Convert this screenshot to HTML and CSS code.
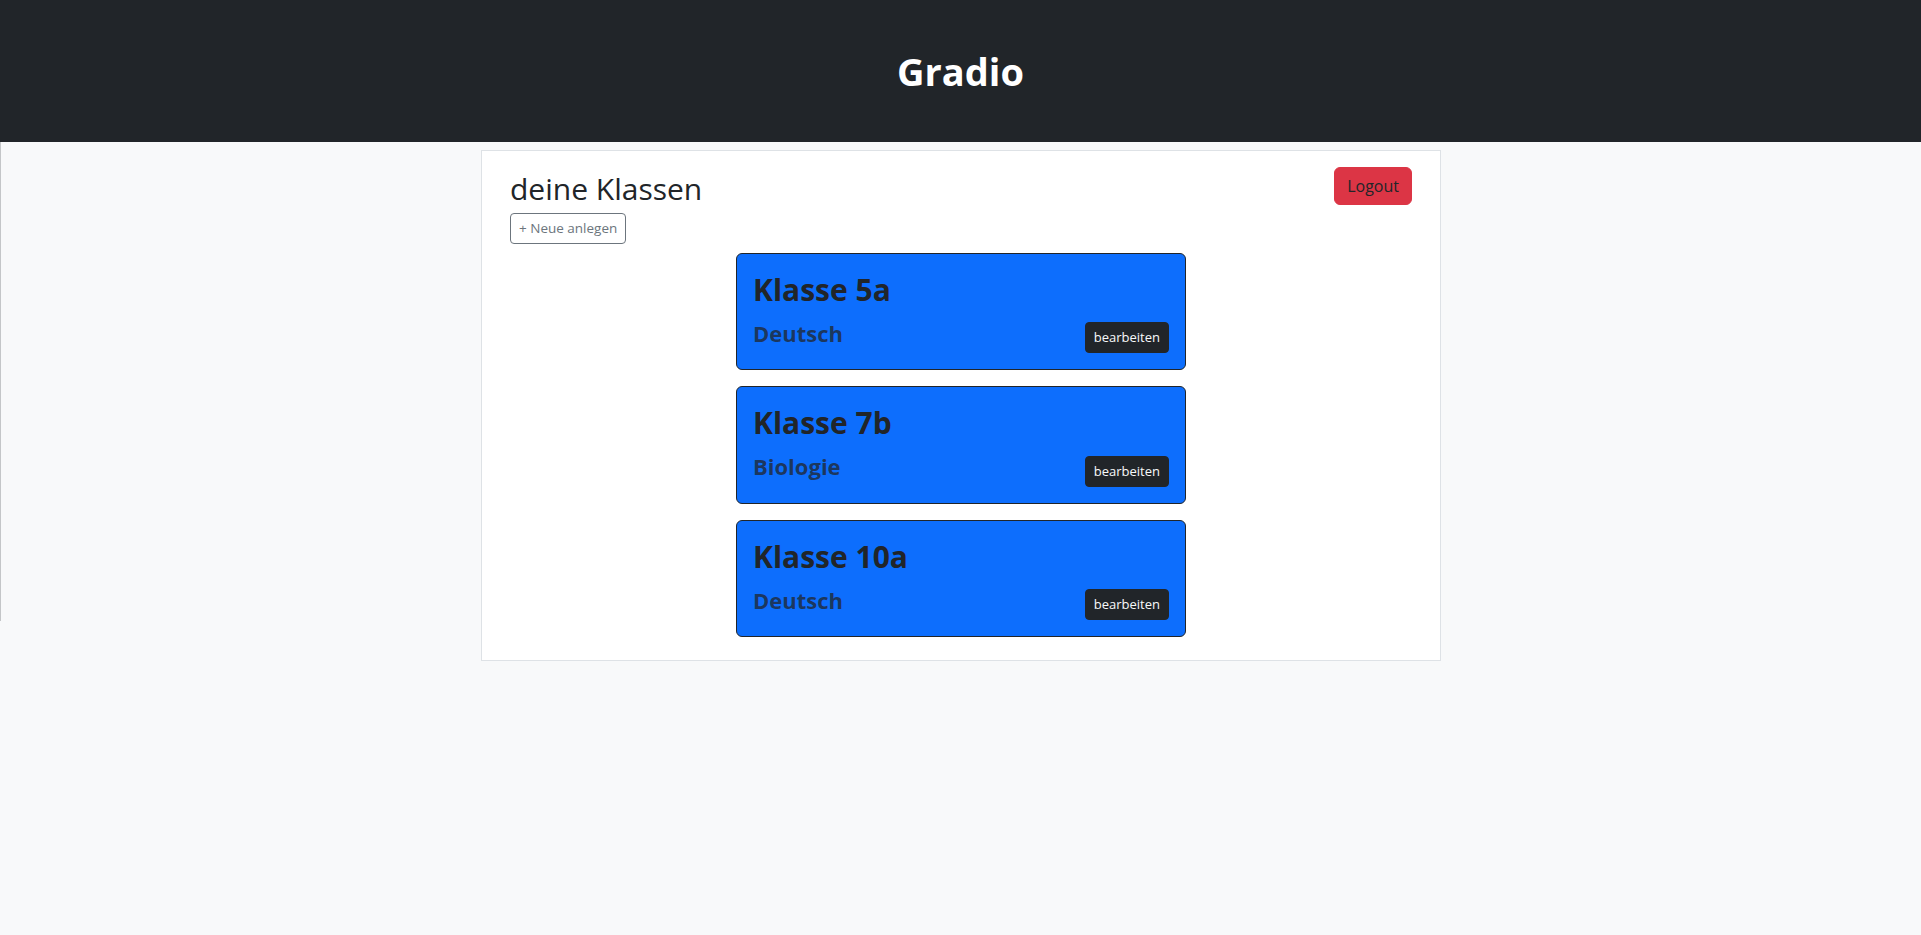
FILE: index.html
```html
<!DOCTYPE html>
<html lang="de">
<head>
    <meta charset="UTF-8">
    <meta name="viewport" content="width=device-width, initial-scale=1.0">
    <title>Gradio</title>
    <link rel="stylesheet" href="styles.css">
</head>
<body>
    <header class="topbar">
        <h1>Gradio</h1>
    </header>

    <div class="page">
        <div class="panel">
            <div class="panel-head">
                <div>
                    <h3>deine Klassen</h3>
                    <button class="btn btn-sm btn-outline">+ Neue anlegen</button>
                </div>
                <button class="btn btn-danger">Logout</button>
            </div>

            <div class="class-list">
                <div class="class-card">
                    <h2>Klasse 5a</h2>
                    <div class="class-row">
                        <h4>Deutsch</h4>
                        <button class="btn btn-sm btn-dark">bearbeiten</button>
                    </div>
                </div>
                <div class="class-card">
                    <h2>Klasse 7b</h2>
                    <div class="class-row">
                        <h4>Biologie</h4>
                        <button class="btn btn-sm btn-dark">bearbeiten</button>
                    </div>
                </div>
                <div class="class-card">
                    <h2>Klasse 10a</h2>
                    <div class="class-row">
                        <h4>Deutsch</h4>
                        <button class="btn btn-sm btn-dark">bearbeiten</button>
                    </div>
                </div>
            </div>
        </div>
    </div>
</body>
</html>
```

FILE: styles.css
```css
body{
    margin: 0;
    font-family: "Segoe UI", "Open Sans", sans-serif;
    /* thin grey rule down the left edge */
    background: linear-gradient(#c4c6c8, #c4c6c8) no-repeat 0 0 / 1px 621px, #f8f9fa;
    color: #212529;
}

.topbar{
    background-color: #212529;
    height: 142px;
    display: flex;
    align-items: center;
    justify-content: center;
}
.topbar h1{
    margin: 0;
    color: #fff;
    font-size: 38px;
    font-weight: 700;
}

.page{
    padding-top: 8px;
    padding-left: 1px;
}

.panel{
    width: 50%;
    margin: 0 auto;
    background-color: #fff;
    border: 1px solid #dee2e6;
    padding: 16px 28px 23px;
    box-sizing: border-box;
}

.panel-head{
    display: flex;
    justify-content: space-between;
    align-items: flex-start;
}
.panel-head h3{
    margin: 4px 0 6px;
    font-size: 30px;
    font-weight: 400;
    line-height: 1.2;
}

.btn{
    font-family: inherit;
    font-size: 16px;
    line-height: 1.5;
    padding: 6px 12px;
    border: 1px solid transparent;
    border-radius: 6px;
    cursor: pointer;
}
.btn-sm{
    font-size: 13px;
    line-height: 21px;
    padding: 4px 8px;
    border-radius: 4px;
}
.btn-outline{
    background: transparent;
    color: #6c757d;
    border-color: #6c757d;
    font-size: 13.5px;
}
.btn-danger{
    background-color: #dc3545;
    border-color: #dc3545;
    color: #212529;
}
.btn-dark{
    background-color: #212529;
    border-color: #212529;
    color: #f8f9fa;
}

.class-list{
    display: flex;
    flex-direction: column;
    align-items: center;
    gap: 16px;
    margin-top: 9px;
}

.class-card{
    width: 450px;
    box-sizing: border-box;
    background-color: #0d6efd;
    border: 1px solid #212529;
    border-radius: 6px;
    padding: 16px;
}
.class-card h2{
    margin: 2px 0 12px;
    font-size: 30px;
    font-weight: 700;
    line-height: 1.2;
}
.class-row{
    display: flex;
    justify-content: space-between;
    align-items: flex-end;
}
.class-row h4{
    margin: 0 0 7px;
    font-size: 22px;
    font-weight: 700;
    line-height: 1.2;
    color: rgba(33, 37, 41, 0.75);
}
```
